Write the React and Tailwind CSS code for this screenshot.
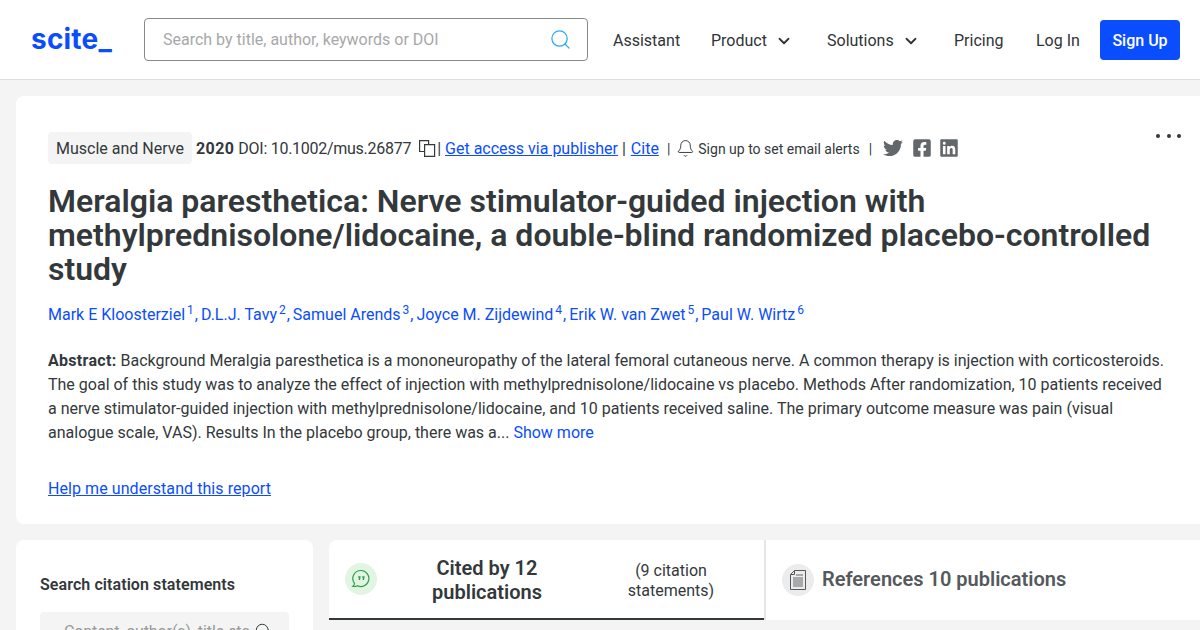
import React from 'react';
import { ChevronDown, Search, Bell } from 'lucide-react';
import { FaTwitter, FaFacebookSquare, FaLinkedin } from 'react-icons/fa';

const authors = [
  ['Mark E Kloosterziel', 1],
  ['D.L.J. Tavy', 2],
  ['Samuel Arends', 3],
  ['Joyce M. Zijdewind', 4],
  ['Erik W. van Zwet', 5],
  ['Paul W. Wirtz', 6],
];

function Header() {
  return (
    <header className="h-[80px] bg-white border-b border-[#dedede] flex items-center shrink-0">
      <div className="w-[144px] pl-[31px] text-[#0a4dff] text-[28px] font-bold tracking-[0.2px] leading-none -mt-[2px] font-['Inter',sans-serif]">scite_</div>
      <div className="w-[444px] h-[43px] border border-[#8a8a8a] rounded flex items-center justify-between pl-[18px] pr-[15px]">
        <span className="text-[#a8a8a8] text-[16px]">Search by title, author, keywords or DOI</span>
        <Search size={23} strokeWidth={1.3} className="text-[#2aa8f5]" />
      </div>
      <nav className="flex items-center text-[16px] text-[#2f3437] ml-[25px] mt-[1px] [&>span]:pt-[2px]">
        <span className="w-[98px]">Assistant</span>
        <span className="w-[116px] flex items-center gap-[8px]">Product <ChevronDown size={18} strokeWidth={2.4} /></span>
        <span className="w-[127px] flex items-center gap-[8px]">Solutions <ChevronDown size={18} strokeWidth={2.4} /></span>
        <span className="w-[82px]">Pricing</span>
        <span className="w-[64px]">Log In</span>
        <span className="w-[80px] h-[40px] bg-[#0a4dff] rounded text-white font-medium flex items-center justify-center">Sign Up</span>
      </nav>
    </header>
  );
}

function ArticleCard() {
  return (
    <section className="relative ml-4 h-[428px] bg-white rounded-l-lg pl-8 pr-8 pt-[36px] text-[#33383b]">
      <div className="flex items-center h-[32px] text-[16px] whitespace-nowrap [&>span]:pt-[2px] [&>a]:pt-[2px]">
        <span className="h-[32px] w-[144px] bg-[#f4f4f4] rounded flex items-center justify-center">Muscle and Nerve</span>
        <span className="font-bold ml-[4px] tracking-[0.4px]">2020</span>
        <span className="ml-[4px] tracking-[-0.27px]">DOI: 10.1002/mus.26877</span>
        <svg width="17" height="17" viewBox="0 0 17 17" fill="none" stroke="#33383b" strokeWidth="1.2" className="ml-[8px]">
          <path d="M5 11.5H.6V.6h9V4" />
          <path d="M5.6 4.6h10v11.8h-10z" />
        </svg>
        <span className="ml-[1px]">|</span>
        <a className="ml-[4px] text-[#0a4dff] underline">Get access via publisher</a>
        <span className="ml-[4px]">|</span>
        <a className="ml-[5px] text-[#0a4dff] underline">Cite</a>
        <span className="ml-[8px] text-[14px]">|</span>
        <Bell size={19} strokeWidth={1.2} className="ml-[6px]" />
        <span className="ml-[3px] text-[14px]">Sign up to set email alerts</span>
        <span className="ml-[9px] text-[14px]">|</span>
        <FaTwitter size={20} className="ml-[11px] text-[#62676b]" />
        <FaFacebookSquare size={20} className="ml-[9px] text-[#62676b]" />
        <FaLinkedin size={20} className="ml-[7px] text-[#62676b]" />
      </div>
      <div className="absolute top-[38px] right-[19px] flex gap-[6.5px]">
        <i className="w-[4px] h-[4px] rounded-full bg-[#33383b]" />
        <i className="w-[4px] h-[4px] rounded-full bg-[#33383b]" />
        <i className="w-[4px] h-[4px] rounded-full bg-[#33383b]" />
      </div>
      <h1 className="mt-[20px] text-[32px] leading-[34px] font-semibold w-[1120px]">
        Meralgia paresthetica: Nerve stimulator-guided injection with methylprednisolone/lidocaine, a double-blind randomized placebo-controlled study
      </h1>
      <div className="mt-[17px] h-[24px] text-[16px] leading-[24px] text-[#0a4dff] whitespace-nowrap">
        {authors.map(([name, n], i) => (
          <span key={name}>
            {name}
            <sup className="text-[12px] ml-[2px] mr-[1px]">{n}</sup>
            {i < authors.length - 1 ? <span className="mr-[3px]">,</span> : null}
          </span>
        ))}
      </div>
      <p className="mt-[22px] text-[16px] leading-[24px] w-[1120px]">
        <b className="font-bold tracking-[0.3px]">Abstract:</b> Background Meralgia paresthetica is a mononeuropathy of the lateral femoral cutaneous nerve. A common therapy is injection with corticosteroids. The goal of this study was to analyze the effect of injection with methylprednisolone/lidocaine vs placebo. Methods After randomization, 10 patients received a nerve stimulator-guided injection with methylprednisolone/lidocaine, and 10 patients received saline. The primary outcome measure was pain (visual analogue scale, VAS). Results In the placebo group, there was a... <a className="text-[#0a4dff]">Show more</a>
      </p>
      <a className="block mt-[32px] text-[16px] leading-[24px] text-[#0a4dff] underline tracking-[0.07px]">Help me understand this report</a>
    </section>
  );
}

function BottomRow() {
  return (
    <div className="flex mt-4 ml-4 gap-4 flex-1 min-h-0">
      <aside className="w-[297px] bg-white rounded-t-lg px-6 pt-[35px] text-[#33383b] overflow-hidden">
        <h3 className="text-[16px] leading-5 font-semibold tracking-[0.08px]">Search citation statements</h3>
        <div className="mt-[17px] h-[40px] bg-[#f4f4f4] rounded flex items-start pt-[10px] pl-[24px] gap-[4px] text-[#9a9a9a] text-[16px] leading-5 tracking-[-0.1px]">
          <span>Content, author(s), title etc</span>
          <Search size={18} strokeWidth={1.3} className="text-[#33383b] shrink-0" />
        </div>
      </aside>
      <div className="flex-1 bg-white rounded-tl-lg flex h-[80px]">
        <div className="w-[437px] h-[80px] border-b-2 border-[#33383b] flex items-center pl-[16px]">
          <span className="w-[32px] h-[32px] rounded-full bg-[#e2f5e3] flex items-center justify-center shrink-0">
            <svg width="20" height="20" viewBox="0 0 20 20" fill="none" stroke="#2e9e4f" strokeWidth="1.2">
              <path d="M10 1.5a8 8 0 1 1-3.6 15.2c-1.2.6-3 .9-4.6.7 1-.8 1.6-1.7 1.7-3A8 8 0 0 1 10 1.5z" />
              <path d="M7.2 8h1.6l-.5 3M11.2 8h1.6l-.5 3" strokeWidth="1.5" />
            </svg>
          </span>
          <div className="w-[158px] ml-[31px] pt-[2px] text-center text-[20px] leading-[24px] font-semibold text-[#33383b]">Cited by 12 publications</div>
          <div className="w-[140px] ml-[35px] pt-[4px] text-center text-[16px] leading-[20px] text-[#33383b]">(9 citation statements)</div>
        </div>
        <div className="flex-1 h-[80px] border-l-2 border-[#e6e6e6] flex items-center pl-[16px] gap-[8px] -ml-[2px]">
          <span className="w-[32px] h-[32px] rounded-full bg-[#ececec] flex items-center justify-center shrink-0">
            <svg width="16" height="20" viewBox="0 0 16 20" fill="none" stroke="#55595c" strokeWidth="1">
              <path d="M4.5.5h11v19H.5V4.5z" />
              <path d="M4.5.5v4h-4" />
              <path d="M6 5h7M3 8h10M3 10h10M3 12h10M3 14h10M3 16h10" strokeWidth="0.9" />
            </svg>
          </span>
          <span className="-mt-[2px] text-[20px] font-semibold text-[#55595c]">References 10 publications</span>
        </div>
      </div>
    </div>
  );
}

export default function App() {
  return (
    <div className="h-[630px] w-[1200px] overflow-hidden bg-[#f4f4f4] flex flex-col font-['Roboto','Liberation_Sans',sans-serif]">
      <Header />
      <main className="pt-4 flex flex-col flex-1 min-h-0">
        <ArticleCard />
        <BottomRow />
      </main>
    </div>
  );
}
